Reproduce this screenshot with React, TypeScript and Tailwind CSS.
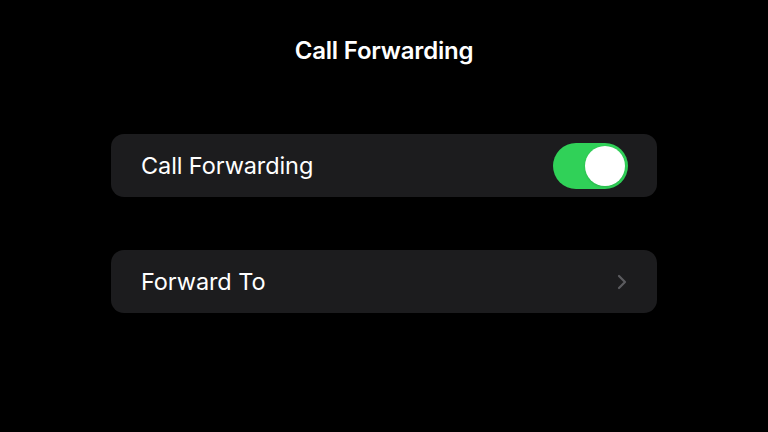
import { useState } from 'react';

function Toggle({ on, onChange }: { on: boolean; onChange: (v: boolean) => void }) {
  return (
    <button
      onClick={() => onChange(!on)}
      className={`relative w-[75px] h-[46px] rounded-full transition-colors ${on ? 'bg-[#30d158]' : 'bg-[#39393d]'}`}
    >
      <span
        className={`absolute top-[3px] w-[40px] h-[40px] rounded-full bg-white shadow transition-all ${on ? 'left-[32px]' : 'left-[3px]'}`}
      />
    </button>
  );
}

export default function App() {
  const [forwarding, setForwarding] = useState(true);

  return (
    <div
      className="w-[768px] h-[432px] bg-black text-white flex flex-col items-center"
      style={{ fontFamily: 'Inter, "Noto Sans", sans-serif' }}
    >
      {/* Header */}
      <div className="h-[100px] w-full flex items-center justify-center pt-[1px]">
        <h1 className="text-[24px] font-semibold tracking-[-0.2px]">Call Forwarding</h1>
      </div>

      {/* Settings */}
      <div className="w-[546px] mt-[34px] flex flex-col gap-[53px]">
        <div className="h-[63px] rounded-[13px] bg-[#1c1c1e] flex items-center justify-between pl-[30px] pr-[29px]">
          <span className="text-[23.5px] tracking-[-0.1px]">Call Forwarding</span>
          <Toggle on={forwarding} onChange={setForwarding} />
        </div>

        <div className="h-[63px] rounded-[13px] bg-[#1c1c1e] flex items-center justify-between pl-[30px] pr-[30px]">
          <span className="text-[23.5px] tracking-[-0.1px]">Forward To</span>
          <svg width="10" height="16" viewBox="0 0 10 16" fill="none">
            <path d="M2 2l6 6-6 6" stroke="#5b5b5f" strokeWidth="2.2" strokeLinecap="round" strokeLinejoin="round" />
          </svg>
        </div>
      </div>
    </div>
  );
}
